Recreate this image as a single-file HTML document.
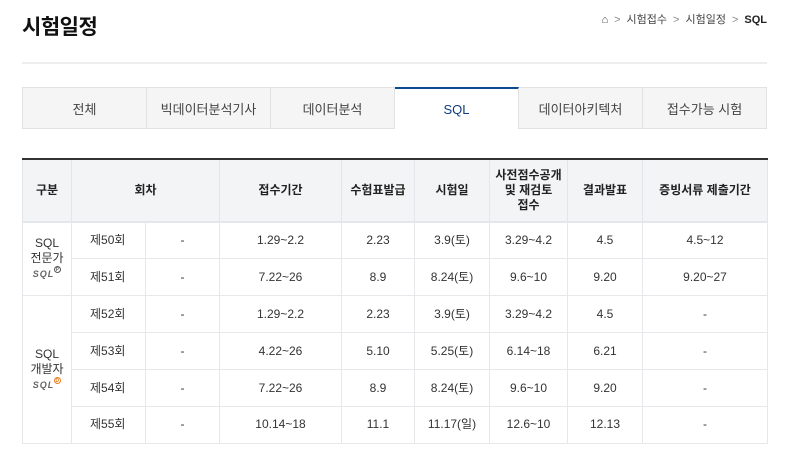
<!DOCTYPE html>
<html><head><meta charset="utf-8"><style>
*{margin:0;padding:0;box-sizing:border-box}
body{width:800px;height:461px;background:#fff;font-family:"Liberation Sans","Noto Sans CJK KR",sans-serif;color:#222;position:relative;overflow:hidden}
.title{position:absolute;left:22px;top:11px;font-size:21px;font-weight:bold;color:#111;letter-spacing:-0.5px}
.bc{position:absolute;right:33px;top:11px;font-size:11px;color:#444}
.bc b{color:#222}
.bc span{margin:0 6px;color:#888}
.hr{position:absolute;left:22px;top:62px;width:745px;height:2px;background:#eee}
.tabs{position:absolute;left:22px;top:87px;width:745px;height:42px;display:flex}
.tab{flex:1;background:#f5f5f5;border:1px solid #e2e2e2;border-left:none;font-size:13px;color:#444;display:flex;align-items:center;justify-content:center}
.tab:first-child{border-left:1px solid #e2e2e2}
.tab.on{background:#fff;border-top:2px solid #0b4a8f;border-bottom:none;color:#0b3d7a}
table{position:absolute;left:22px;top:158px;width:745px;border-collapse:collapse;border-top:2px solid #333;table-layout:fixed;font-size:12px}
th{background:#f2f4f6;font-weight:bold;height:63px;font-size:12px;line-height:15px;color:#222;border:1px solid #e3e6ea;border-top:none;border-bottom:2px solid #e3e6ea}
td{height:36.9px;text-align:center;border:1px solid #e6e8eb;color:#333;line-height:15px}
td.n{text-align:left;padding-left:18px}
.cat{font-size:12px;line-height:15px;color:#333}
.logo{font-style:italic;font-weight:bold;font-size:9px;color:#666;letter-spacing:1px}
.p{display:inline-block;width:7px;height:7px;border-radius:50%;border:1px solid #555;font-size:5px;line-height:6px;vertical-align:top;font-style:normal}
.d{border-color:#e87c1c;color:#e87c1c}
</style></head><body>
<div class="title">시험일정</div>
<div class="bc">⌂<span>&gt;</span>시험접수<span>&gt;</span>시험일정<span>&gt;</span><b>SQL</b></div>
<div class="hr"></div>
<div class="tabs"><div class="tab">전체</div><div class="tab">빅데이터분석기사</div><div class="tab">데이터분석</div><div class="tab on">SQL</div><div class="tab">데이터아키텍처</div><div class="tab">접수가능 시험</div></div>
<table>
<colgroup><col style="width:49px"><col style="width:74px"><col style="width:74px"><col style="width:122px"><col style="width:73px"><col style="width:75px"><col style="width:78px"><col style="width:75px"><col style="width:125px"></colgroup>
<tr><th>구분</th><th colspan="2">회차</th><th>접수기간</th><th>수험표발급</th><th>시험일</th><th>사전점수공개<br>및 재검토<br>접수</th><th>결과발표</th><th>증빙서류 제출기간</th></tr>
<tr><td rowspan="2" class="cat">SQL<br>전문가<br><span class="logo">SQL<i class="p">P</i></span></td><td class="n">제50회</td><td>-</td><td>1.29~2.2</td><td>2.23</td><td>3.9(토)</td><td>3.29~4.2</td><td>4.5</td><td>4.5~12</td></tr>
<tr><td class="n">제51회</td><td>-</td><td>7.22~26</td><td>8.9</td><td>8.24(토)</td><td>9.6~10</td><td>9.20</td><td>9.20~27</td></tr>
<tr><td rowspan="4" class="cat">SQL<br>개발자<br><span class="logo">SQL<i class="p d">D</i></span></td><td class="n">제52회</td><td>-</td><td>1.29~2.2</td><td>2.23</td><td>3.9(토)</td><td>3.29~4.2</td><td>4.5</td><td>-</td></tr>
<tr><td class="n">제53회</td><td>-</td><td>4.22~26</td><td>5.10</td><td>5.25(토)</td><td>6.14~18</td><td>6.21</td><td>-</td></tr>
<tr><td class="n">제54회</td><td>-</td><td>7.22~26</td><td>8.9</td><td>8.24(토)</td><td>9.6~10</td><td>9.20</td><td>-</td></tr>
<tr><td class="n">제55회</td><td>-</td><td>10.14~18</td><td>11.1</td><td>11.17(일)</td><td>12.6~10</td><td>12.13</td><td>-</td></tr>
</table>
</body></html>
